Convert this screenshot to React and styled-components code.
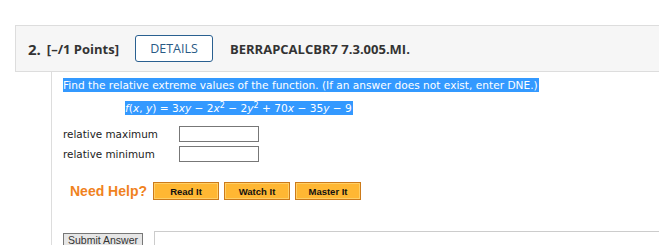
import React from 'react';
import styled, { createGlobalStyle } from 'styled-components';

const Global = createGlobalStyle`
  html, body {
    margin: 0;
    padding: 0;
    background: #fff;
  }
`;

const Page = styled.div`
  padding: 25px 0 0 15px;
  width: 644px;
  height: 220px;
  overflow: hidden;
`;

const Header = styled.div`
  display: flex;
  align-items: center;
  height: 45px;
  padding-left: 12px;
  background: #f6f6f6;
  border: 1px solid #ddd;
  border-right: none;
  font-family: "Open Sans", "Noto Sans", sans-serif;
  color: #333;
`;

const Number = styled.span`
  font-size: 15px;
  font-weight: 700;
  margin-right: 6px;
`;

const Points = styled.span`
  font-size: 13px;
  font-weight: 700;
  margin-right: 16px;
`;

const DetailsButton = styled.button`
  box-sizing: border-box;
  width: 78px;
  height: 27px;
  border: 1px solid #2a6090;
  border-radius: 3px;
  background: #fff;
  color: #2a5a85;
  font-family: "Open Sans", "Noto Sans", sans-serif;
  font-size: 12.5px;
  padding: 0;
  margin-right: 17px;
`;

const Code = styled.span`
  font-size: 13px;
  font-weight: 700;
  color: #333;
`;

const Body = styled.div`
  margin-left: 36px;
  border-left: 1px solid #ddd;
  padding: 6px 0 0 11px;
  font-family: "DejaVu Sans", Verdana, sans-serif;
  font-size: 10.6px;
  color: #222;
  height: 200px;
`;

const Selected = styled.span`
  background: #3399ff;
  color: #fff;
  line-height: 14px;
  padding: 1px 1px 1px 0;
`;

const Prompt = styled.div`
  line-height: 14px;
`;

const Formula = styled.div`
  margin: 9px 0 0 62px;
  line-height: 14px;
  i {
    font-style: italic;
  }
  sup {
    font-size: 8px;
    vertical-align: 4px;
    line-height: 0;
  }
`;

const Answers = styled.div`
  display: grid;
  grid-template-columns: 116px 80px;
  row-gap: 4px;
  margin-top: 11px;
  align-items: center;
  font-size: 10.4px;
`;

const Label = styled.span`
  color: #222;
`;

const Input = styled.div`
  box-sizing: border-box;
  width: 80px;
  height: 16px;
  border: 1px solid #777;
  background: #fff;
`;

const Help = styled.div`
  display: flex;
  align-items: center;
  margin: 20px 0 0 7px;
  gap: 5px;
`;

const HelpLabel = styled.span`
  font-family: "Liberation Sans", Arial, sans-serif;
  font-size: 14px;
  font-weight: 700;
  color: #f0821e;
  margin-right: 1px;
`;

const HelpButton = styled.button`
  box-sizing: border-box;
  width: 66px;
  height: 18px;
  padding: 0;
  background: #ffb733;
  border: 1px solid #cc7a1a;
  box-shadow: inset 0 0 0 1px #ffcf66;
  font-family: "Liberation Sans", Arial, sans-serif;
  font-size: 9.5px;
  font-weight: 700;
  color: #111;
`;

const SubmitRow = styled.div`
  display: flex;
  align-items: flex-start;
  margin-top: 31px;
  gap: 11px;
`;

const Submit = styled.button`
  box-sizing: border-box;
  width: 80px;
  height: 14px;
  margin-top: 2px;
  padding: 0;
  background: #e6e6e6;
  border: 1px solid #777;
  font-family: "Liberation Sans", Arial, sans-serif;
  font-size: 10.5px;
  color: #333;
  line-height: 12px;
`;

const Feedback = styled.div`
  flex: 1;
  height: 30px;
  border-top: 1px solid #ccc;
  border-left: 1px solid #ccc;
`;

export default function App() {
  return (
    <>
      <Global />
      <Page>
        <Header>
          <Number>2.</Number>
          <Points>[–/1 Points]</Points>
          <DetailsButton>DETAILS</DetailsButton>
          <Code>BERRAPCALCBR7 7.3.005.MI.</Code>
        </Header>
        <Body>
          <Prompt>
            <Selected>
              Find the relative extreme values of the function. (If an answer does not exist, enter DNE.)
            </Selected>
          </Prompt>
          <Formula>
            <Selected>
              <i>f</i>(<i>x</i>, <i>y</i>) = 3<i>xy</i> − 2<i>x</i><sup>2</sup> − 2<i>y</i><sup>2</sup> + 70<i>x</i> − 35<i>y</i> − 9
            </Selected>
          </Formula>
          <Answers>
            <Label>relative maximum</Label>
            <Input />
            <Label>relative minimum</Label>
            <Input />
          </Answers>
          <Help>
            <HelpLabel>Need Help?</HelpLabel>
            <HelpButton>Read It</HelpButton>
            <HelpButton>Watch It</HelpButton>
            <HelpButton>Master It</HelpButton>
          </Help>
          <SubmitRow>
            <Submit>Submit Answer</Submit>
            <Feedback />
          </SubmitRow>
        </Body>
      </Page>
    </>
  );
}
